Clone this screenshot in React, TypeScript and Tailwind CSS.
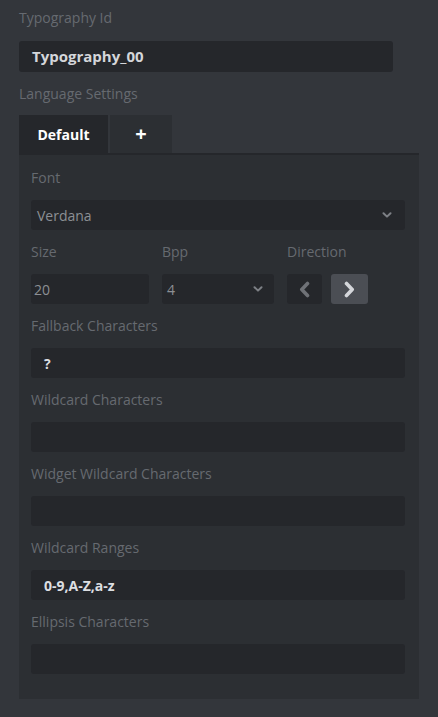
import React from 'react';

const font = { fontFamily: '"Open Sans", "Noto Sans", sans-serif' };

const Chevron: React.FC<{ className?: string }> = ({ className }) => (
  <svg viewBox="0 0 10 6" className={className} fill="none" stroke="currentColor" strokeWidth="2" strokeLinecap="round" strokeLinejoin="round">
    <path d="M1.5 1.2 5 4.6 8.5 1.2" />
  </svg>
);

const Label: React.FC<{ children: React.ReactNode; className?: string }> = ({ children, className = '' }) => (
  <div className={`text-[14px] leading-5 text-[#666a70] ${className}`}>{children}</div>
);

const Field: React.FC<{ value?: string }> = ({ value }) => (
  <div className="mt-[12px] h-[30px] w-[374px] rounded-[3px] bg-[#25272b] px-[13px] flex items-center text-[14px] font-bold text-[#dcdee1]">
    {value}
  </div>
);

export default function App() {
  return (
    <div className="min-h-[717px] w-[438px] bg-[#33363b] pl-[19px] pt-[8px]" style={font}>
      <Label>Typography Id</Label>
      <div className="mt-[13px] h-[31px] w-[374px] rounded-[3px] bg-[#25272b] px-[13px] flex items-center text-[15px] font-bold text-[#d4d6da]">
        Typography_00
      </div>
      <Label className="mt-[12px]">Language Settings</Label>

      {/* Tabs */}
      <div className="mt-[11px] flex h-[38px] w-[400px] gap-[2px]">
        <div className="flex w-[89px] items-center justify-center bg-[#25272b] text-[14px] font-bold text-white">Default</div>
        <div className="flex w-[62px] items-center justify-center bg-[#2c2f33] text-[20px] font-bold leading-none text-white">+</div>
      </div>

      {/* Panel */}
      <div className="w-[400px] border-t-2 border-[#25272b] bg-[#2c2f33] pb-[25px] pl-[12px] pt-[13px]">
        <Label>Font</Label>
        <div className="mt-[12px] flex h-[30px] w-[374px] items-center justify-between rounded-[3px] bg-[#25272b] pl-[6px] pr-[13px] text-[14px] text-[#8c8f94]">
          <span>Verdana</span>
          <Chevron className="h-[6px] w-[10px] text-[#7d8085]" />
        </div>

        <div className="mt-[12px] flex gap-[13px]">
          <div className="w-[118px]">
            <Label>Size</Label>
            <div className="mt-[12px] flex h-[30px] items-center rounded-[3px] bg-[#25272b] px-[3px] text-[14px] text-[#8c8f94]">20</div>
          </div>
          <div className="w-[112px]">
            <Label>Bpp</Label>
            <div className="mt-[12px] flex h-[30px] items-center justify-between rounded-[3px] bg-[#25272b] pl-[5px] pr-[11px] text-[14px] text-[#8c8f94]">
              <span>4</span>
              <Chevron className="h-[6px] w-[10px] text-[#7d8085]" />
            </div>
          </div>
          <div>
            <Label>Direction</Label>
            <div className="mt-[12px] flex gap-[9px]">
              <div className="flex h-[30px] w-[35px] items-center justify-center rounded-[3px] bg-[#25272b]">
                <svg viewBox="0 0 11 17" className="h-[17px] w-[11px] text-[#6f7277]" fill="none" stroke="currentColor" strokeWidth="3.6" strokeLinecap="round" strokeLinejoin="round">
                  <path d="M8.5 2.5 2.8 8.5l5.7 6" />
                </svg>
              </div>
              <div className="flex h-[30px] w-[37px] items-center justify-center rounded-[3px] bg-[#4b4e54]">
                <svg viewBox="0 0 11 17" className="h-[17px] w-[11px] text-[#d4d6da]" fill="none" stroke="currentColor" strokeWidth="3.6" strokeLinecap="round" strokeLinejoin="round">
                  <path d="M2.5 2.5l5.7 6-5.7 6" />
                </svg>
              </div>
            </div>
          </div>
        </div>

        <Label className="mt-[12px]">Fallback Characters</Label>
        <Field value="?" />
        <Label className="mt-[12px]">Wildcard Characters</Label>
        <Field />
        <Label className="mt-[12px]">Widget Wildcard Characters</Label>
        <Field />
        <Label className="mt-[12px]">Wildcard Ranges</Label>
        <Field value="0-9,A-Z,a-z" />
        <Label className="mt-[12px]">Ellipsis Characters</Label>
        <Field />
      </div>
    </div>
  );
}
